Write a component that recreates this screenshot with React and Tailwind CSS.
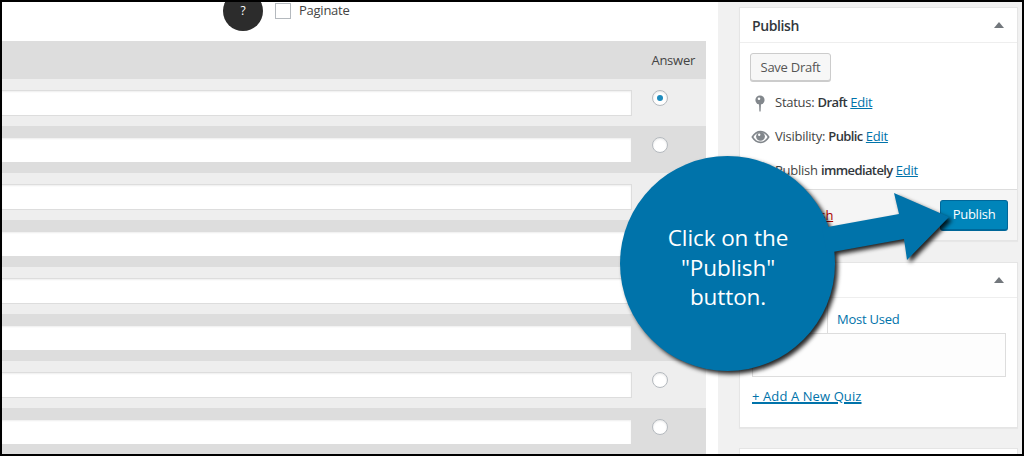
import React from 'react';

const ROWS = [0, 1, 2, 3, 4, 5, 6, 7];

function Triangle() {
  return (
    <svg width="10" height="6" viewBox="0 0 10 6" className="block">
      <path d="M5 0 L10 6 L0 6 Z" fill="#72777c" />
    </svg>
  );
}

function PinIcon() {
  return (
    <svg width="12" height="17" viewBox="0 0 12 17" className="block">
      <circle cx="6" cy="5" r="4.6" fill="#82878c" />
      <circle cx="5" cy="3.8" r="1.3" fill="#fff" />
      <path d="M5 8 H7 L6.6 16.5 H5.4 Z" fill="#82878c" />
    </svg>
  );
}

function EyeIcon() {
  return (
    <svg width="19" height="14" viewBox="0 0 19 14" className="block">
      <path
        d="M0.3 7 C3 2.6 6 0.8 9.5 0.8 C13 0.8 16 2.6 18.7 7 C16 11.4 13 13.2 9.5 13.2 C6 13.2 3 11.4 0.3 7 Z M2.4 7 C4.4 10 6.6 11.6 9.5 11.6 C12.4 11.6 14.6 10 16.6 7 C14.6 4 12.4 2.4 9.5 2.4 C6.6 2.4 4.4 4 2.4 7 Z"
        fill="#82878c"
        fillRule="evenodd"
      />
      <circle cx="9.5" cy="6.4" r="4.4" fill="#82878c" />
      <circle cx="8.2" cy="4.8" r="1.2" fill="#fff" />
    </svg>
  );
}

function MiscLine({ icon, label, value }) {
  return (
    <div className="flex items-center h-[34px]">
      <div className="w-[25px] flex justify-center pr-[5px]">{icon}</div>
      <span>
        {label} <b className="font-semibold tracking-[-0.6px] text-[#32373c]">{value}</b>{' '}
        <a className="text-[#0073aa] underline">Edit</a>
      </span>
    </div>
  );
}

function Callout() {
  return (
    <div className="absolute left-[600px] top-[140px] w-[360px] h-[240px]">
      <svg width="360" height="240" viewBox="600 140 360 240" className="block drop-shadow-[3px_3px_2px_rgba(0,0,0,0.85)]">
        <circle cx="725.5" cy="261.5" r="107.5" fill="#0073aa" />
        <path d="M820 226 L897 212 L892 191 L947 215 L905 258 L902 237 L825 251 Z" fill="#0073aa" />
      </svg>
      <div className="absolute left-[46px] top-[81px] w-[160px] text-center text-white text-[22.5px] tracking-[-0.1px] leading-[29.5px]">
        Click on the
        <br />
        "Publish"
        <br />
        button.
      </div>
    </div>
  );
}

export default function App() {
  return (
    <div className="relative w-[1024px] h-[456px] border-2 border-black overflow-hidden flex bg-white text-[13px] tracking-[-0.25px] text-[#444] font-['Open_Sans',sans-serif]">
      {/* quiz table */}
      <div className="w-[716px] shrink-0 pr-[12px]">
        <div className="h-[39px] flex items-start pl-[221px]">
          <div className="w-[40px] h-[40px] -mt-[11px] rounded-full bg-[#2c2c2c] text-white text-[12px] flex items-center justify-center shrink-0">
            ?
          </div>
          <div className="w-[16px] h-[16px] ml-[12px] mt-[1px] border border-[#b4b9be] bg-white shrink-0" />
          <span className="ml-[8px] mt-[-2px] leading-[20px]">Paginate</span>
        </div>
        <div className="h-[38px] bg-[#ddd] flex items-center justify-end pr-[11px]">
          <span className="leading-none">Answer</span>
        </div>
        {ROWS.map((i) => (
          <div key={i} className={`h-[47px] flex items-start pt-[11px] ${i % 2 === 0 ? 'bg-[#eee]' : 'bg-[#ddd]'}`}>
            <div className="w-[630px] h-[26px] bg-white border border-[#ddd] border-l-0 shadow-[inset_0_1px_2px_rgba(0,0,0,0.07)]" />
            <div className="w-[16px] h-[16px] ml-[20px] rounded-full bg-white border border-[#b4b9be] shadow-[inset_0_1px_2px_rgba(0,0,0,0.1)] flex items-center justify-center">
              {i === 0 && <div className="w-[6px] h-[6px] rounded-full bg-[#1e8cbe]" />}
            </div>
          </div>
        ))}
      </div>

      {/* sidebar */}
      <div className="flex-1 bg-[#f1f1f1] pl-[21px] pr-[4px] pt-[5px]">
        <div className="bg-white border border-[#e5e5e5] shadow-[0_1px_1px_rgba(0,0,0,0.04)]">
          <div className="h-[35px] px-[12px] flex items-center justify-between border-b border-[#eee]">
            <span className="text-[14px] tracking-[-0.4px] font-semibold text-[#32373c]">Publish</span>
            <span className="pr-[1px]"><Triangle /></span>
          </div>
          <div className="pl-[10px] pt-[10px]">
            <div className="w-[81px] h-[28px] pt-[1px] rounded-[3px] border border-[#ccc] bg-[#f7f7f7] shadow-[0_1px_0_#ccc] text-[#555] flex items-center justify-center">
              Save Draft
            </div>
            <div className="pt-[5px] pb-[1px]">
              <MiscLine icon={<PinIcon />} label="Status:" value="Draft" />
              <MiscLine icon={<EyeIcon />} label="Visibility:" value="Public" />
              <MiscLine icon={null} label="Publish" value="immediately" />
            </div>
          </div>
          <div className="h-[51px] pt-[1px] bg-[#f5f5f5] border-t border-[#ddd] pl-[10px] pr-[9px] flex items-center justify-between">
            <a className="text-[#a00] underline">Move to Trash</a>
            <div className="w-[68px] h-[31px] rounded-[3px] bg-[#0085ba] border border-[#006799] border-b-2 text-white flex items-center justify-center">
              Publish
            </div>
          </div>
        </div>

        <div className="mt-[21px] h-[166px] bg-white border border-[#e5e5e5] shadow-[0_1px_1px_rgba(0,0,0,0.04)]">
          <div className="h-[35px] px-[12px] flex items-center justify-between border-b border-[#eee]">
            <span className="text-[14px] tracking-[-0.4px] font-semibold text-[#32373c]">Quizzes</span>
            <span className="pr-[1px]"><Triangle /></span>
          </div>
          <div className="pl-[12px] pr-[11px]">
            <div className="flex items-stretch h-[35px]">
              <a className="w-[75px] pt-[14px] text-[#0073aa]">All Quizzes</a>
              <div className="pl-[9px] pt-[12px] border-l border-[#ddd] text-[#0073aa]">
                Most Used
              </div>
            </div>
            <div className="h-[44px] border border-[#ddd] bg-[#fdfdfd]" />
            <a className="block mt-[9px] leading-[20px] tracking-[0.1px] text-[#0073aa] underline decoration-[1.5px] font-medium">+ Add A New Quiz</a>
          </div>
        </div>

        <div className="mt-[20px] h-[40px] bg-white border border-[#e5e5e5]" />
      </div>

      <Callout />
    </div>
  );
}
